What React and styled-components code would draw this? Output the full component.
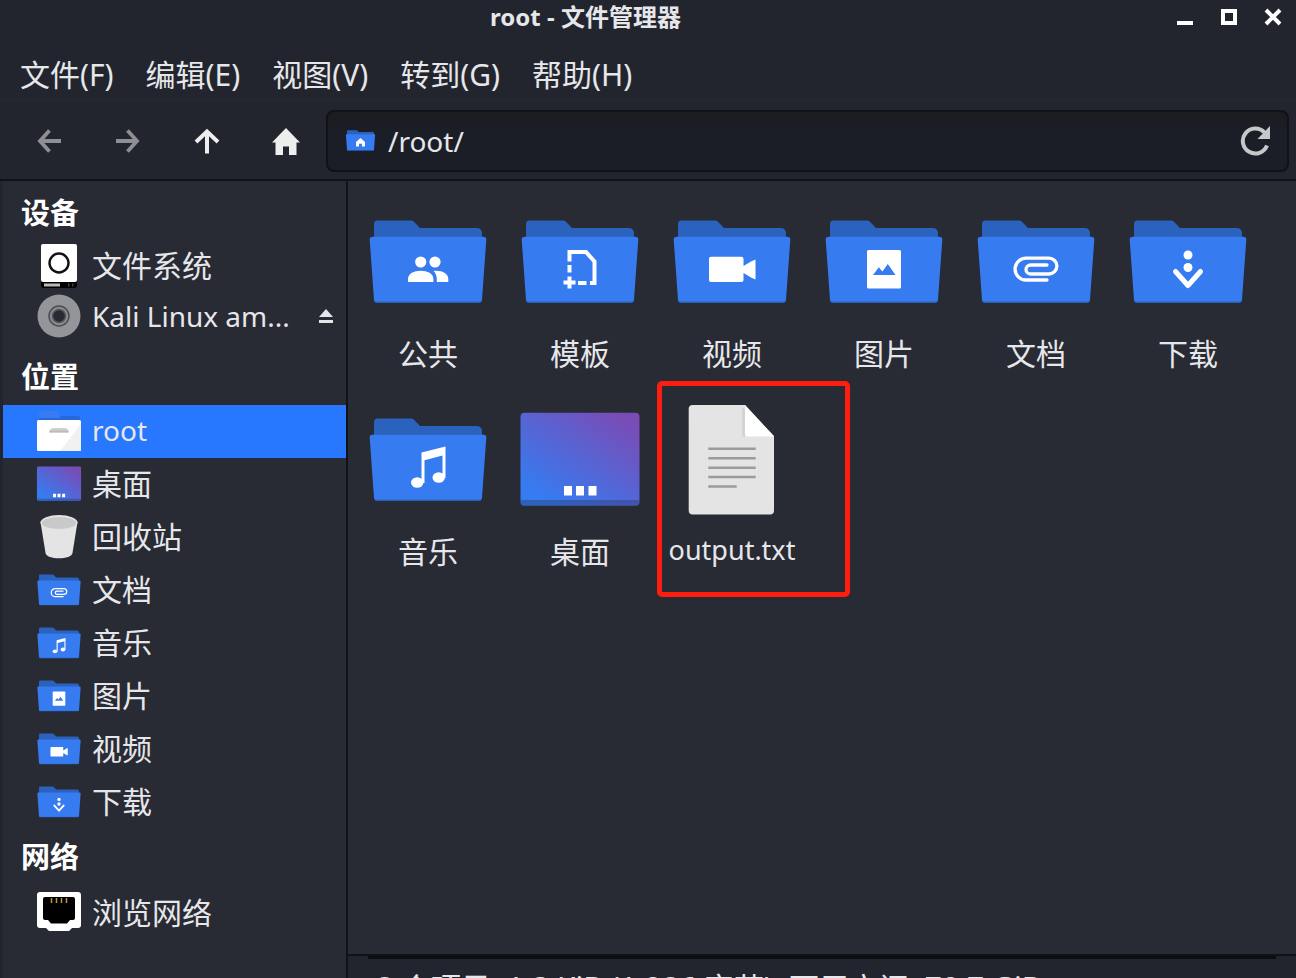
import React from "react";
import styled, { createGlobalStyle } from 'styled-components';

const colors = {
  chrome: '#23252e',
  base: '#282a34',
  field: '#1b1e26',
  line: '#101217',
  select: '#2777ff',
  text: '#e6e7ea',
  dim: '#8e8f93',
  folder: '#367bf0',
  folderBack: '#2b62bd',
}

const GlobalStyle = createGlobalStyle`
  * {
    box-sizing: border-box;
  }
  body {
    margin: 0;
    overflow: hidden;
    background: ${colors.chrome};
    color: ${colors.text};
    font-family: "Noto Sans", "Noto Sans CJK SC", sans-serif;
    font-size: 30px;
    line-height: 38px;
  }
  button, input {
    margin: 0;
    padding: 0;
    border: 0;
    background: none;
    color: inherit;
    font: inherit;
  }
  svg {
    display: block;
    flex: none;
  }
`

const Window = styled.div`
  display: flex;
  flex-direction: column;
  height: 100vh;
  overflow: hidden;
`

const TitleBar = styled.header`
  display: flex;
  align-items: center;
  height: 34px;
  padding: 0 1px 0 8px;
`

const Title = styled.h1`
  flex: 1;
  margin: 0;
  text-align: center;
  font-size: 24px;
  line-height: 32px;
  font-weight: 700;
`

const WindowButton = styled.button`
  display: flex;
  align-items: center;
  justify-content: center;
  width: 44px;
  height: 34px;
`

const MenuBar = styled.nav`
  display: flex;
  padding: 16px 4px 0;
  border-bottom: 1px solid #272831;
`

const MenuItem = styled.button`
  height: 50px;
  padding: 0 16px;
`

const ToolBar = styled.div`
  display: flex;
  align-items: center;
  height: 78px;
  padding: 1px 7px 0 9px;
`

const NavButton = styled.button`
  display: flex;
  align-items: center;
  justify-content: center;
  width: 79px;
  height: 62px;
  color: ${props => props.disabled ? colors.dim : '#eeeeec'};
`

const PathBar = styled.div`
  display: flex;
  align-items: center;
  flex: 1;
  gap: 12px;
  height: 62px;
  margin-left: 1px;
  padding: 0 17px;
  border: 2px solid ${colors.line};
  border-radius: 8px;
  background: linear-gradient(#1b1c20, ${colors.field} 30%);
`

const PathInput = styled.input`
  flex: 1;
  min-width: 0;
  font-size: 28px;
  outline: none;
`

const ReloadButton = styled.button`
  color: #c6c7c9;
`

const Body = styled.div`
  display: flex;
  flex: 1;
  min-height: 0;
  border-top: 2px solid ${colors.line};
`

const SideBar = styled.aside`
  flex: 0 0 345px;
  margin-left: 3px;
  padding-top: 4px;
  border-right: 2px solid ${colors.line};
  background: ${colors.base};
`

const Section = styled.section`
  margin-bottom: ${props => props.$gap || 0}px;
`

const SectionTitle = styled.h2`
  margin: 0;
  padding-left: 18px;
  font-size: 29px;
  line-height: 56px;
  font-weight: 700;
  color: #fff;
`

const Place = styled.a`
  display: flex;
  align-items: center;
  gap: 10px;
  height: ${props => props.$height}px;
  padding: 0 12px ${props => props.$latin ? 4 : 2}px 33px;
  font-size: ${props => props.$latin ? 28 : 30}px;
  color: ${colors.text};
  text-decoration: none;
  background: ${props => props.$active ? colors.select : 'transparent'};
`

const PlaceName = styled.span`
  flex: 1;
  white-space: nowrap;
`

const Content = styled.main`
  display: flex;
  flex-direction: column;
  flex: 1;
  min-width: 0;
  background: ${colors.base};
`

const FileGrid = styled.div`
  display: grid;
  flex: 1;
  grid-template-columns: repeat(auto-fill, 152px);
  grid-auto-rows: 198px;
  align-content: start;
  padding: 19px 4px 0;
`

const FileItem = styled.a`
  position: relative;
  display: flex;
  flex-direction: column;
  align-items: center;
  gap: 11px;
  color: ${colors.text};
  font-size: ${props => props.$latin ? 27 : 30}px;
  line-height: ${props => props.$latin ? 34 : 38}px;
  text-decoration: none;
`

// red frame drawn over the marked file
const Marker = styled.span`
  position: absolute;
  top: -17px;
  left: 1px;
  width: 193px;
  height: 216px;
  border: 5px solid #ff1d0f;
  border-radius: 5px;
`

const StatusBar = styled.footer`
  height: 24px;
  padding: 0 20px;
  overflow: hidden;
  border-top: 2px solid ${colors.line};
  background: ${colors.chrome};
`

const StatusText = styled.div`
  padding: 10px 8px 0;
  border-top: 3px solid #0c0e12;
  white-space: nowrap;
`

const glyphs = {
  home: (
    <path fill="#fff" d="M62 52L44 68v18h12V75h12v11h12V68z" />
  ),
  people: (
    <g fill="#fff">
      <circle cx="54.7" cy="62" r="5.6" />
      <circle cx="69" cy="62" r="5.6" />
      <path d="M42 82v-3c0-5.500 6-8.300 12.700-8.300S67.400 73.500 67.400 79v3z" />
      <path d="M67.500 71c8-1 14.800 2.300 14.800 8v3H70.800v-3c0-3.500-1.300-6-3.300-8z" />
    </g>
  ),
  template: (
    <g fill="none" stroke="#fff" strokeWidth="4">
      <path d="M51.500 61.500V52H68l8.500 9.500V83H72M51.500 65v7.500M60 83h8.500" />
      <path d="M51.500 76.500v12M45.500 82.500h12" />
    </g>
  ),
  video: (
    <path fill="#fff" d="M41 56.700h30.500a2 2 0 0 1 2 2V66l7.500-4.500 4.500-2v20l-4.500-2-7.500-4.500v7a2 2 0 0 1-2 2H41a2 2 0 0 1-2-2V58.700a2 2 0 0 1 2-2z" />
  ),
  image: (
    <g>
      <rect x="45" y="50" width="34" height="38.500" rx="1.500" fill="#fff" />
      <path fill={colors.folder} d="M51 75l5.800-7.800 3.600 4.300 5.400-7.500L73.500 75z" />
    </g>
  ),
  clip: (
    <path fill="none" stroke="#fff" strokeWidth="3.300" strokeLinecap="round" d="M73 80H52a10.900 10.900 0 0 1 0-21.800h23a7.900 7.900 0 0 1 0 15.800H56.500a4.500 4.500 0 0 1 0-9H73" />
  ),
  download: (
    <g fill="#fff">
      <circle cx="62" cy="55" r="4.500" />
      <circle cx="62" cy="67.500" r="4.500" />
      <path fill="none" stroke="#fff" strokeWidth="5" strokeLinecap="round" strokeLinejoin="round" d="M49.500 71.500L62 85.500l12.500-14" />
    </g>
  ),
  music: (
    <g fill="#fff">
      <ellipse cx="51.200" cy="84.500" rx="6.200" ry="5.200" />
      <ellipse cx="72.700" cy="79.500" rx="6.200" ry="5.200" />
      <path d="M55.500 54.500l24-6V80h-3V57.500l-18 4.800V85h-3z" />
    </g>
  ),
}

function FolderIcon({ glyph, size }) {
  return (
    <svg width={size} height={size} viewBox="0 0 124 124" aria-hidden="true">
      <path fill={colors.folderBack} d="M8 24a3.500 3.500 0 0 1 3.500-3.500h33c2 0 3 .6 4.200 1.900l5.300 5.600h57a5 5 0 0 1 5 5v10H8z" />
      <path fill={colors.folder} d="M6.500 36.700h111a2.800 2.800 0 0 1 2.800 3L116 100a2.500 2.500 0 0 1-2.500 2.400h-103A2.500 2.500 0 0 1 8 100L3.700 39.700a2.800 2.800 0 0 1 2.800-3z" />
      <path fill="#2a63c4" d="M8.500 101.500h107a2.500 2.500 0 0 1-2 1.300h-103a2.500 2.500 0 0 1-2-1.300z" />
      {glyphs[glyph]}
    </svg>
  )
}

function DesktopIcon({ size }) {
  const id = 'desk' + size;
  return (
    <svg width={size} height={size} viewBox="0 0 124 124" aria-hidden="true">
      <defs>
        <linearGradient id={id} x1="0.1" y1="0.95" x2="0.9" y2="0.05">
          <stop offset="0.08" stopColor="#367bf0" />
          <stop offset="1" stopColor="#7b4bb5" />
        </linearGradient>
      </defs>
      <rect x="2.500" y="14.700" width="119" height="93" rx="4" fill={`url(#${id})`} />
      <path fill="#1d2340" fillOpacity="0.3" d="M2.500 102h119v1.700a4 4 0 0 1-4 4h-111a4 4 0 0 1-4-4z" />
      <path fill="#fff" d="M46 88h8v9.500h-8zM58 88h8v9.500h-8zM70.500 88h8v9.500h-8z" />
    </svg>
  )
}

function TextFileIcon({ size }) {
  return (
    <svg width={size} height={size} viewBox="0 0 124 124" aria-hidden="true">
      <path fill="#e4e4e4" d="M22.700 7H75l29 31v74.500a4 4 0 0 1-4 4H22.700a4 4 0 0 1-4-4V11a4 4 0 0 1 4-4z" />
      <path fill="#d4d4d4" d="M72 9l3 2v28h-1.500A2.500 2.500 0 0 1 72 36z" />
      <path fill="#fff" d="M75 7l29 31.500H78a3 3 0 0 1-3-3z" />
      <path fill="none" stroke="#9b9b9b" strokeWidth="2.600" d="M38.300 50.700h47.400M38.300 60.300h47.400M38.300 69.700h47.400M38.300 79h47.400M38.300 88.500h28.400" />
    </svg>
  )
}

function DriveIcon() {
  return (
    <svg width="46" height="46" viewBox="0 0 46 46" aria-hidden="true">
      <path fill="#000" d="M5 36h36v6a3 3 0 0 1-3 3H8a3 3 0 0 1-3-3z" />
      <rect x="5" y="1" width="36" height="38" rx="2" fill="#fff" />
      <path fill="#b9b9b9" d="M8 40.500h16v3H8z" />
      <path fill="#444" d="M32 40.500h1.500v3H32zM36 40.500h1.500v3H36z" />
      <circle cx="23" cy="20" r="9.500" fill="none" stroke="#111" strokeWidth="2.400" />
    </svg>
  )
}

function DiscIcon() {
  return (
    <svg width="46" height="46" viewBox="0 0 46 46" aria-hidden="true">
      <circle cx="23" cy="23" r="21.500" fill="#949599" />
      <circle cx="23" cy="23" r="10" fill="#8b8c90" stroke="#4b4d55" strokeWidth="1.500" />
      <circle cx="23" cy="23" r="6.500" fill={colors.base} stroke="#55575e" strokeWidth="1.500" />
    </svg>
  )
}

function RootFolderIcon() {
  return (
    <svg width="46" height="46" viewBox="0 0 46 46" aria-hidden="true">
      <path fill="#2767d8" d="M3 9h39a2 2 0 0 1 2 2v3H3z" />
      <path fill="#367bf0" d="M3 5.500A2 2 0 0 1 5 4h16c2 0 2 2 4 5l-2 2H3z" />
      <rect x="1" y="13" width="44" height="31" rx="1.500" fill="#fff" />
      <path fill="#f1f1f1" d="M45 17v25.500a1.500 1.500 0 0 1-1.500 1.500H24z" />
      <path fill="#cfcfcf" d="M17 21h12a4 4 0 0 1 3.500 4.500h-19A4 4 0 0 1 17 21z" />
      <path fill="#bcbcbc" d="M13.500 23.500h19v2h-19z" />
    </svg>
  )
}

function TrashIcon() {
  return (
    <svg width="46" height="46" viewBox="0 0 46 46" aria-hidden="true">
      <path fill="#e4e4e4" d="M4.500 8h37l-5 31c-.8 7-26.200 7-27 0z" />
      <ellipse cx="23" cy="8.500" rx="18.500" ry="7.500" fill="#e4e4e4" />
      <ellipse cx="23" cy="9" rx="17.200" ry="6" fill="#c9c9c9" />
    </svg>
  )
}

function NetworkIcon() {
  return (
    <svg width="46" height="46" viewBox="0 0 46 46" aria-hidden="true">
      <path fill="#fff" d="M4 2h38a3 3 0 0 1 3 3v30a3 3 0 0 1-3 3h-6l-3 3H13l-3-3H4a3 3 0 0 1-3-3V5a3 3 0 0 1 3-3z" />
      <path fill="#000" d="M9 7h28a2 2 0 0 1 2 2v19a2 2 0 0 1-2 2h-3l-3 3.500H15L12 30H9a2 2 0 0 1-2-2V9a2 2 0 0 1 2-2z" />
      <path stroke="#b9973a" strokeWidth="1.500" d="M15.500 8v5M20.500 8v5M25.500 8v5M30.500 8v5" />
    </svg>
  )
}

const EjectIcon = () => (
  <svg width="16" height="16" viewBox="0 0 16 16" aria-hidden="true">
    <path fill="#e4e5e7" d="M8 1l7 8H1zM1 12h14v3H1z" />
  </svg>
)

const icons = {
  drive: <DriveIcon />,
  disc: <DiscIcon />,
  root: <RootFolderIcon />,
  trash: <TrashIcon />,
  network: <NetworkIcon />,
}

function ItemIcon({ icon, size }) {
  if (icon === 'desktop') return <DesktopIcon size={size} />
  if (icon === 'text') return <TextFileIcon size={size} />
  if (icons[icon]) return icons[icon]
  return <FolderIcon glyph={icon} size={size} />
}

const menus = ['文件(F)', '编辑(E)', '视图(V)', '转到(G)', '帮助(H)'];

const sections = [
  {
    title: '设备', rowHeight: 51, gap: 6,
    places: [
      { name: '文件系统', icon: 'drive' },
      { name: 'Kali Linux am...', icon: 'disc', latin: true, eject: true },
    ],
  },
  {
    title: '位置', rowHeight: 53,
    places: [
      { name: 'root', icon: 'root', latin: true, active: true },
      { name: '桌面', icon: 'desktop' },
      { name: '回收站', icon: 'trash' },
      { name: '文档', icon: 'clip' },
      { name: '音乐', icon: 'music' },
      { name: '图片', icon: 'image' },
      { name: '视频', icon: 'video' },
      { name: '下载', icon: 'download' },
    ],
  },
  {
    title: '网络', rowHeight: 57,
    places: [{ name: '浏览网络', icon: 'network' }],
  },
]

const files = [
  { name: '公共', icon: 'people' },
  { name: '模板', icon: 'template' },
  { name: '视频', icon: 'video' },
  { name: '图片', icon: 'image' },
  { name: '文档', icon: 'clip' },
  { name: '下载', icon: 'download' },
  { name: '音乐', icon: 'music' },
  { name: '桌面', icon: 'desktop' },
  { name: 'output.txt', icon: 'text', latin: true, marked: true },
]

function App() {
  const [path, setPath] = React.useState('/root/');

  return (
    <>
    <GlobalStyle />
    <Window>
      <TitleBar>
        <Title>root - 文件管理器</Title>
        <WindowButton aria-label="最小化">
          <svg width="18" height="18" viewBox="0 0 18 18"><path fill="#fff" d="M1 13h16v4H1z" /></svg>
        </WindowButton>
        <WindowButton aria-label="最大化">
          <svg width="18" height="18" viewBox="0 0 18 18"><path fill="none" stroke="#fff" strokeWidth="4" d="M3 3h12v12H3z" /></svg>
        </WindowButton>
        <WindowButton aria-label="关闭">
          <svg width="18" height="18" viewBox="0 0 18 18"><path fill="none" stroke="#fff" strokeWidth="4" d="M2 2l14 14M16 2L2 16" /></svg>
        </WindowButton>
      </TitleBar>
      <MenuBar>
        {menus.map(menu => <MenuItem key={menu}>{menu}</MenuItem>)}
      </MenuBar>
      <ToolBar>
        <NavButton disabled aria-label="后退">
          <svg width="28" height="28" viewBox="0 0 28 28"><path fill="none" stroke="currentColor" strokeWidth="3.800" d="M14.500 3.500L5 14l9.500 10.500M5 14h21" /></svg>
        </NavButton>
        <NavButton disabled aria-label="前进">
          <svg width="28" height="28" viewBox="0 0 28 28"><path fill="none" stroke="currentColor" strokeWidth="3.800" d="M13.500 3.500L23 14l-9.500 10.500M23 14H2" /></svg>
        </NavButton>
        <NavButton aria-label="向上">
          <svg width="28" height="28" viewBox="0 0 28 28"><path fill="none" stroke="currentColor" strokeWidth="4" d="M3 15L14 4.500 25 15M14 5v21.500" /></svg>
        </NavButton>
        <NavButton aria-label="主目录">
          <svg width="28" height="28" viewBox="0 0 28 28"><path fill="currentColor" d="M14 1L0 15.500h3.500V28h7.500v-8.500h6V28h7.500V15.500H28z" /></svg>
        </NavButton>
        <PathBar>
          <FolderIcon glyph="home" size={31} />
          <PathInput aria-label="路径" value={path} onChange={e => setPath(e.target.value)} />
          <ReloadButton aria-label="刷新">
            <svg width="30" height="30" viewBox="0 0 30 30">
              <path fill="none" stroke="currentColor" strokeWidth="4" d="M27 19.500A12.500 12.500 0 1 1 24.500 6.500" />
              <path fill="currentColor" d="M30 0v13H17.500z" />
            </svg>
          </ReloadButton>
        </PathBar>
      </ToolBar>
      <Body>
        <SideBar>
          {sections.map(section => (
            <Section key={section.title} $gap={section.gap}>
              <SectionTitle>{section.title}</SectionTitle>
              {section.places.map(place => (
                <Place key={place.name} href="#" $height={section.rowHeight} $latin={place.latin} $active={place.active}>
                  <ItemIcon icon={place.icon} size={46} />
                  <PlaceName>{place.name}</PlaceName>
                  {place.eject ? <EjectIcon /> : null}
                </Place>
              ))}
            </Section>
          ))}
        </SideBar>
        <Content>
          <FileGrid>
            {files.map(file => (
              <FileItem key={file.name} href="#" $latin={file.latin}>
                <ItemIcon icon={file.icon} size={124} />
                <span>{file.name}</span>
                {file.marked ? <Marker /> : null}
              </FileItem>
            ))}
          </FileGrid>
          <StatusBar>
            <StatusText>8 个项目: 1.3 KiB (1,286 字节), 可用空间: 70.7 GiB</StatusText>
          </StatusBar>
        </Content>
      </Body>
    </Window>
    </>
  )
}

export default App;
